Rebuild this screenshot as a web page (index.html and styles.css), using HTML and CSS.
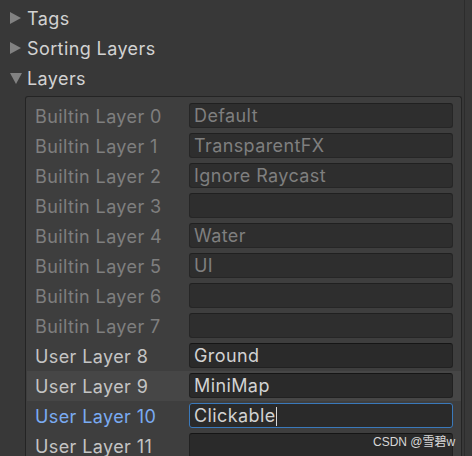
FILE: index.html
```html
<!DOCTYPE html>
<html>
<head>
<meta charset="utf-8">
<link rel="stylesheet" href="styles.css">
</head>
<body>
<div class="window">
  <div class="main">
    <div class="header"><span class="tri right"></span><span>Tags</span></div>
    <div class="header"><span class="tri right"></span><span>Sorting Layers</span></div>
    <div class="header"><span class="tri down"></span><span>Layers</span></div>
    <div class="panel">
      <div class="row disabled"><span class="label">Builtin Layer 0</span><div class="field">Default</div></div>
      <div class="row disabled"><span class="label">Builtin Layer 1</span><div class="field">TransparentFX</div></div>
      <div class="row disabled"><span class="label">Builtin Layer 2</span><div class="field">Ignore Raycast</div></div>
      <div class="row disabled"><span class="label">Builtin Layer 3</span><div class="field"></div></div>
      <div class="row disabled"><span class="label">Builtin Layer 4</span><div class="field">Water</div></div>
      <div class="row disabled"><span class="label">Builtin Layer 5</span><div class="field">UI</div></div>
      <div class="row disabled"><span class="label">Builtin Layer 6</span><div class="field"></div></div>
      <div class="row disabled"><span class="label">Builtin Layer 7</span><div class="field"></div></div>
      <div class="row"><span class="label">User Layer 8</span><div class="field">Ground</div></div>
      <div class="row hover"><span class="label">User Layer 9</span><div class="field">MiniMap</div></div>
      <div class="row focus"><span class="label">User Layer 10</span><div class="field">Clickable<span class="caret"></span></div></div>
      <div class="row"><span class="label">User Layer 11</span><div class="field"></div></div>
    </div>
  </div>
  <div class="gutter"></div>
</div>
<div class="watermark">CSDN @雪碧w</div>
</body>
</html>
```
FILE: styles.css
```css
html, body {
  margin: 0;
  padding: 0;
  width: 472px;
  height: 456px;
  overflow: hidden;
  background: #383838;
  font-family: Inter, "Noto Sans", sans-serif;
  font-size: 18px;
  letter-spacing: 0.4px;
}
.window {
  display: flex;
  height: 456px;
}
.main {
  width: 462px;
  padding-top: 3px;
}
.gutter {
  margin-left: 2px;
  width: 1px;
  background: #2c2c2c;
}
.header {
  height: 30px;
  display: flex;
  align-items: center;
  color: #d2d2d2;
  padding-left: 10px;
  gap: 6px;
}
.tri {
  width: 0;
  height: 0;
  display: inline-block;
}
.tri.right {
  border-top: 6px solid transparent;
  border-bottom: 6px solid transparent;
  border-left: 11px solid #828282;
}
.tri.down {
  border-left: 6px solid transparent;
  border-right: 6px solid transparent;
  border-top: 11px solid #828282;
  margin-right: -1px;
}
.panel {
  margin-top: 3px;
  margin-left: 25px;
  border: 1px solid #242424;
  border-bottom: none;
  border-radius: 3px 3px 0 0;
  background: #3e3e3e;
  padding-top: 4px;
  padding-left: 1px;
}
.row {
  height: 30px;
  display: flex;
  align-items: center;
  color: #c4c4c4;
}
.row.hover {
  background: #464646;
}
.label {
  width: 154px;
  padding-left: 8px;
  white-space: nowrap;
}
.row.disabled .label {
  color: #7f7f7f;
}
.row.focus .label {
  color: #7aabf2;
}
.field {
  box-sizing: border-box;
  width: 264px;
  height: 25px;
  margin-top: -1px;
  background: #2a2a2a;
  border: 1px solid #212121;
  border-top-color: #151515;
  border-radius: 3px;
  padding-left: 4px;
  color: #d2d2d2;
  line-height: 23px;
  white-space: nowrap;
  overflow: hidden;
}
.row.disabled .field {
  color: #7f7f7f;
  background: #2e2e2e;
  border-color: #262626;
  border-top-color: #202020;
}
.row.focus .field {
  border-color: #3a79bb;
}
.caret {
  display: inline-block;
  width: 1px;
  height: 19px;
  background: #d8d8d8;
  vertical-align: -4px;
}
.watermark {
  position: absolute;
  left: 373px;
  top: 432px;
  color: #d8d8d8;
  font-family: "Liberation Sans", "Noto Sans CJK SC", sans-serif;
  font-size: 12px;
  letter-spacing: 0;
}
```
